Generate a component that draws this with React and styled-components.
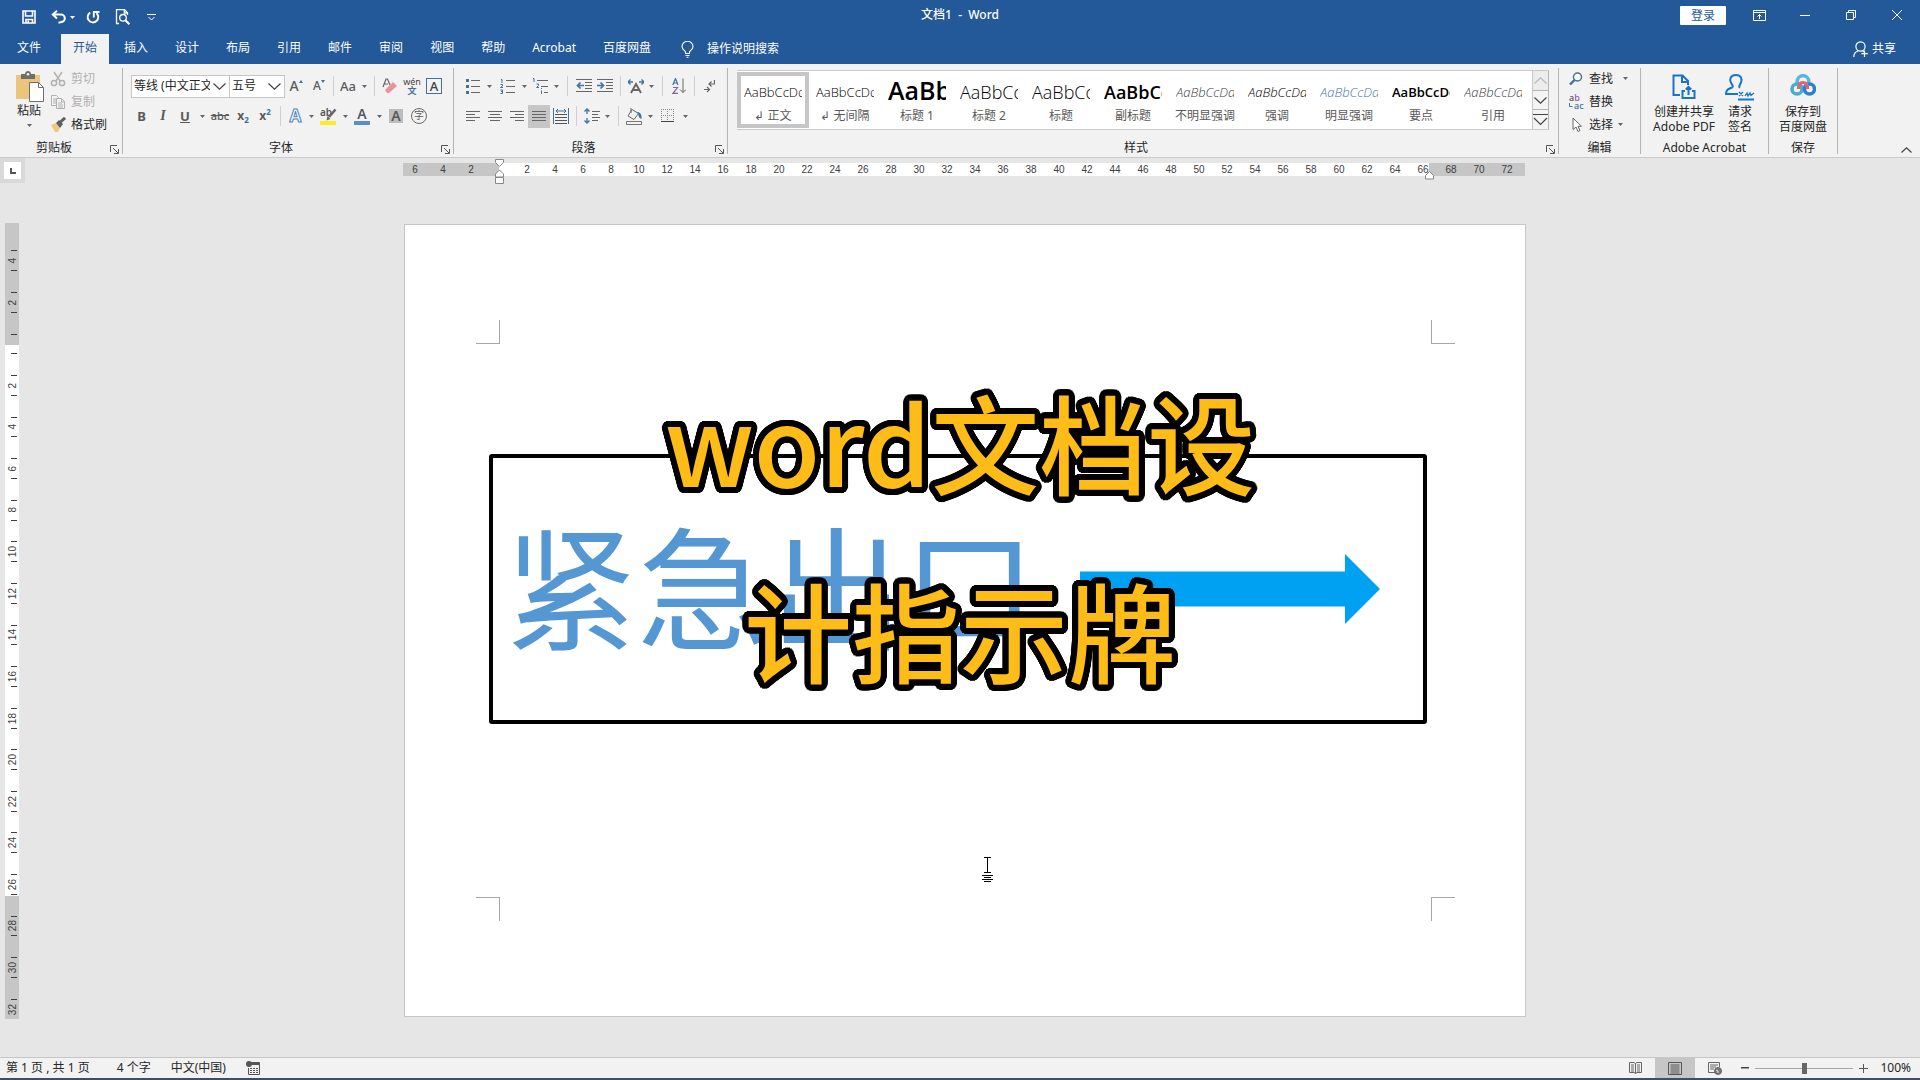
import React from "react";
import styled, { createGlobalStyle, css } from "styled-components";

const UI_FONT = '"Noto Sans", "Noto Sans CJK SC", sans-serif';
const BLUE = "#235899";
const STEEL = "#41719c";
const INK = "#5a5a5a";

const Global = createGlobalStyle`
  *, *::before, *::after { box-sizing: border-box; }
  body { margin: 0; font: 12px/16px ${UI_FONT}; color: #262626; background: #e6e6e6; }
  button, select, input { font: inherit; color: inherit; }
  button { border: 0; padding: 0; background: none; white-space: nowrap; }
  svg { display: block; flex: none; }
`;

const Shell = styled.div`
  position: relative;
  display: flex;
  flex-direction: column;
  min-height: 100vh;
  overflow: hidden;
`;

/* ---------- title bar ---------- */
const TitleBar = styled.header`
  display: grid;
  grid-template-columns: 1fr auto 1fr;
  height: 34px;
  background: ${BLUE};
  color: #fff;
`;
const QuickAccess = styled.div`
  display: flex;
  align-items: center;
  padding-left: 12px;
`;
const QuickButton = styled.button`
  display: flex;
  align-items: center;
  justify-content: center;
  width: ${(p) => p.$w || 32}px;
  height: 32px;
`;
const DocTitle = styled.h1`
  margin: 0;
  font-size: 12px;
  font-weight: 500;
  line-height: 30px;
  white-space: pre;
`;
const WindowTools = styled.div`
  display: flex;
  justify-content: flex-end;
  align-items: flex-start;
`;
const LoginButton = styled.button`
  width: 46px;
  height: 19px;
  margin: 6px 10px 0 0;
  border-radius: 1px;
  background: #fff;
  color: ${BLUE};
`;
const WindowButton = styled.button`
  display: flex;
  align-items: center;
  justify-content: center;
  width: 46px;
  height: 30px;
`;

/* ---------- tabs ---------- */
const TabBar = styled.nav`
  display: flex;
  height: 30px;
  gap: 3px;
  background: ${BLUE};
  color: #fff;
`;
const Tab = styled.button`
  height: 30px;
  padding: 0 ${(p) => (p.$file ? 17 : 12)}px 2px;
  color: ${(p) => (p.$active ? BLUE : "#fff")};
  background: ${(p) => (p.$active ? "#f2f2f2" : "transparent")};
`;
const TellMe = styled.button`
  display: flex;
  align-items: center;
  gap: 13px;
  margin-left: 15px;
`;
const Share = styled.button`
  display: flex;
  align-items: center;
  gap: 4px;
  margin: 0 24px 0 auto;
`;

/* ---------- ribbon ---------- */
const Ribbon = styled.section`
  display: flex;
  height: 94px;
  padding-top: 4px;
  background: #f2f2f2;
  border-bottom: 1px solid #cacaca;
`;
const GroupBox = styled.div`
  display: flex;
  flex-direction: column;
  flex: ${(p) => (p.$w ? "none" : "1")};
  min-width: 0;
  width: ${(p) => (p.$w ? p.$w + "px" : "auto")};
  height: 86px;
  border-right: 1px solid #b4b4b4;
`;
const GroupBody = styled.div`
  display: flex;
  flex: 1;
  min-height: 0;
  padding: 0 ${(p) => p.$px ?? 8}px;
  flex-direction: ${(p) => (p.$column ? "column" : "row")};
`;
const GroupFoot = styled.div`
  display: flex;
  align-items: center;
  height: 16px;
  margin-bottom: -2px;
`;
const GroupName = styled.span`
  flex: 1;
  text-align: center;
`;
const Launcher = styled.button`
  display: flex;
  width: 14px;
  padding: 2px 0 0 2px;
`;
const ToolRow = styled.div`
  display: flex;
  align-items: center;
  height: 30px;
  margin-top: ${(p) => p.$top || 0}px;
`;
const Tool = styled.button`
  display: flex;
  align-items: center;
  justify-content: center;
  width: ${(p) => p.$w || 22}px;
  height: 23px;
  flex: none;
  color: ${INK};
  background: ${(p) => (p.$on ? "#c6c6c6" : "transparent")};
`;
const Divider = styled.span`
  display: flex;
  justify-content: center;
  flex: none;
  width: ${(p) => p.$w}px;
  height: 20px;
  &::before {
    content: "";
    width: 1px;
    background: #d0d0d0;
  }
`;
const CaretBox = styled.button`
  display: flex;
  align-items: center;
  justify-content: center;
  flex: none;
  width: ${(p) => p.$w || 8}px;
  height: 23px;
`;
const Letter = styled.span`
  font-family: ${(p) => (p.$serif ? '"Liberation Serif", serif' : UI_FONT)};
  font-size: ${(p) => p.$size || 14}px;
  font-weight: ${(p) => (p.$bold ? 700 : 500)};
  font-style: ${(p) => (p.$italic ? "italic" : "normal")};
  text-decoration: ${(p) => p.$line || "none"};
  line-height: 16px;
  sub, sup { font-size: 8px; line-height: 0; color: ${STEEL}; }
`;
const OutlineLetter = styled.span`
  font-size: 17px;
  font-weight: 700;
  color: #fff;
  line-height: 18px;
  -webkit-text-stroke: 1px #4a83bd;
`;
const BarLetter = styled.span`
  display: block;
  width: 16px;
  height: 18px;
  font-size: 14px;
  font-weight: 600;
  line-height: 13px;
  text-align: center;
  color: ${INK};
  border-bottom: 4px solid #5b8fc0;
`;
const ShadeLetter = styled.span`
  width: 14px;
  height: 14px;
  font-size: 14px;
  font-weight: 600;
  line-height: 14px;
  background: #bdbdbd;
`;
const BoxLetter = styled.span`
  width: 16px;
  height: 16px;
  border: 1px solid ${STEEL};
  font-size: 13px;
  font-weight: 500;
  line-height: 14px;
  color: #404040;
`;
const CircleLetter = styled.span`
  width: 16px;
  height: 16px;
  border: 1px solid #6a6a6a;
  border-radius: 50%;
  font-size: 10px;
  line-height: 13px;
`;
const Pinyin = styled.span`
  display: flex;
  flex-direction: column;
  align-items: center;
  font-size: 9px;
  line-height: 8px;
  color: #444;
  b { font-size: 9px; line-height: 9px; color: ${STEEL}; }
`;

const PasteButton = styled.button`
  display: flex;
  flex-direction: column;
  align-items: center;
  width: 42px;
  padding-top: 3px;
  color: #262626;
`;
const PasteLabel = styled.span`
  margin: 1px 0 5px;
`;
const CommandList = styled.div`
  display: flex;
  flex-direction: column;
  margin-top: -1px;
`;
const Command = styled.button`
  display: flex;
  align-items: center;
  height: 23px;
  gap: 5px;
  color: ${(p) => (p.disabled ? "#b1b1b1" : "#262626")};
`;

const Combo = styled.label`
  display: flex;
  align-items: center;
  gap: 3px;
  width: ${(p) => p.$w}px;
  height: 23px;
  padding-right: 3px;
  border: 1px solid #c6c6c6;
  margin-right: -1px;
  background: #fff;
  flex: none;
`;
const ComboSelect = styled.select`
  flex: 1;
  min-width: 0;
  height: 21px;
  padding: 0 0 0 2px;
  border: 0;
  appearance: none;
  background: transparent;
  overflow: hidden;
  text-overflow: clip;
`;

/* ---------- style gallery ---------- */
const Gallery = styled.div`
  display: flex;
  flex: 1;
  height: 60px;
  margin-top: 2px;
  background: #fff;
  border: 1px solid #cacaca;
  border-width: 1px 0;
  min-width: 0;
`;
const StyleItems = styled.div`
  display: flex;
  flex: 1;
  overflow: hidden;
`;
const StyleItem = styled.button`
  display: flex;
  flex-direction: column;
  align-items: center;
  width: 72px;
  height: 56px;
  margin-top: 1px;
  flex: none;
  border: 4px solid ${(p) => (p.$on ? "#c6c6c6" : "transparent")};
`;
const Preview = styled.span`
  width: 58px;
  height: 32px;
  overflow: hidden;
  text-align: left;
  line-height: ${(p) => (p.$size > 20 ? 28 : 32)}px;
  font-family: "Open Sans", sans-serif;
  font-size: ${(p) => p.$size || 13}px;
  font-weight: ${(p) => p.$weight || 300};
  font-style: ${(p) => (p.$italic ? "italic" : "normal")};
  color: ${(p) => p.$color || "#000"};
`;
const StyleName = styled.span`
  line-height: 16px;
  color: #595959;
`;
const GalleryScroll = styled.div`
  display: flex;
  flex-direction: column;
  width: 17px;
  border-left: 1px solid #c6c6c6;
`;
const ScrollButton = styled.button`
  display: flex;
  align-items: center;
  justify-content: center;
  flex: 1;
  border: 1px solid #b4b4b4;
  border-width: 0 1px ${(p) => (p.$last ? 0 : 1)}px 0;
  background: ${(p) => (p.$off ? "#ececec" : "#f4f4f4")};
`;

const BigButton = styled.button`
  display: flex;
  flex-direction: column;
  align-items: center;
  width: ${(p) => p.$w}px;
  padding-top: 6px;
  line-height: 15px;
`;
const BigIcon = styled.span`
  display: flex;
  height: 30px;
`;
const CollapseArea = styled.div`
  display: flex;
  justify-content: flex-end;
  align-items: flex-end;
  width: 82px;
  padding: 0 8px 4px 0;
`;

/* ---------- rulers and page ---------- */
const RulerRow = styled.div`
  display: flex;
  height: 25px;
  padding-right: 17px;
`;
const TabSelector = styled.button`
  display: flex;
  align-items: center;
  justify-content: center;
  width: 25px;
  height: 25px;
  border: 4px solid #d9d9d9;
  background: #fff;
`;
const RulerCenter = styled.div`
  display: flex;
  flex: 1;
  justify-content: center;
  padding-top: 5px;
`;
const Ruler = styled.div`
  position: relative;
  display: flex;
  height: 13px;
  font: 10px/14px "Liberation Sans", sans-serif;
  color: #404040;
`;
const RulerPart = styled.div`
  display: flex;
  width: ${(p) => p.$w}px;
  padding: 0 ${(p) => p.$end || 0}px 0 ${(p) => p.$start || 0}px;
  justify-content: ${(p) => (p.$end ? "flex-end" : "flex-start")};
  background: ${(p) => (p.$margin ? "#c6c6c6" : "#fff")};
  overflow: hidden;
`;
const RulerNumber = styled.span`
  width: 28px;
  flex: none;
  text-align: center;
`;
const IndentMark = styled.svg`
  position: absolute;
  left: ${(p) => p.$x}px;
  top: ${(p) => p.$y}px;
`;

const Workspace = styled.main`
  display: flex;
  flex: 1;
  gap: 1px;
  padding: 40px 10px 0 5px;
`;
const VRuler = styled.div`
  width: 14px;
  height: 796px;
  overflow: hidden;
  padding-top: 17px;
  background: linear-gradient(#c6c6c6 122px, #fff 122px, #fff 673px, #c6c6c6 673px);
  font: 10px/9px "Liberation Sans", sans-serif;
  color: #404040;
`;
const VScale = styled.div`
  display: grid;
  grid-template-rows: repeat(19, 1fr);
  height: 790px;
`;
const VCell = styled.div`
  display: grid;
  grid-template-rows: 1fr 2fr 1fr;
`;
const VMark = styled.span`
  grid-row: 2;
  display: flex;
  align-items: center;
  justify-content: flex-end;
  width: 6px;
  margin-left: 6px;
  border: 1px solid #404040;
  border-width: 1px 0;
`;
const VNumber = styled.span`
  flex: none;
  writing-mode: vertical-rl;
  rotate: 180deg;
`;
const Canvas = styled.div`
  display: flex;
  flex: 1;
  justify-content: center;
  align-items: flex-start;
  padding-top: 1px;
`;
const Page = styled.article`
  display: flex;
  flex-direction: column;
  width: 1122px;
  padding: 95px 70px 95px 71px;
  background: #fff;
  border: 1px solid #c6c6c6;
`;
const MarkRow = styled.div`
  display: flex;
  justify-content: space-between;
`;
const cornerSides = {
  tl: "0 1px 1px 0",
  tr: "0 0 1px 1px",
  bl: "1px 1px 0 0",
  br: "1px 0 0 1px",
};
const CornerMark = styled.span`
  width: 24px;
  height: 24px;
  border: 0 solid #a6a6a6;
  border-width: ${(p) => cornerSides[p.$at]};
`;
const PageBody = styled.div`
  height: 553px;
  padding: 110px 28px 0 13px;
`;
const Sign = styled.div`
  display: flex;
  align-items: center;
  gap: 44px;
  height: 270px;
  padding-left: 11px;
  border: 4px solid #000;
  border-radius: 3px;
`;
const SignText = styled.p`
  margin: 0;
  padding-bottom: 14px;
  font: 400 133px/160px "Noto Sans CJK SC", sans-serif;
  color: #5597d2;
  white-space: nowrap;
`;
const Pointer = styled.svg`
  position: absolute;
  left: 981px;
  top: 857px;
`;

const ring = Array.from({ length: 36 }, (_, i) => {
  const a = (i * Math.PI) / 18;
  return `${(6 * Math.cos(a)).toFixed(2)}px ${(6 * Math.sin(a)).toFixed(2)}px 0 #000`;
}).join(", ");
const Caption = styled.div`
  position: absolute;
  inset: 0;
  display: flex;
  flex-direction: column;
  align-items: center;
  justify-content: center;
  padding-bottom: 12px;
  font: 500 108px/188px "Noto Sans CJK SC", sans-serif;
  color: #fdbc18;
  text-shadow: ${ring};
  white-space: nowrap;
  pointer-events: none;
`;

/* ---------- status bar ---------- */
const StatusBar = styled.footer`
  display: flex;
  align-items: center;
  height: 23px;
  padding-left: 6px;
  background: #f2f2f2;
  border-top: 1px solid #c6c6c6;
  border-bottom: 2px solid #3c4f66;
`;
const StatusItem = styled.button`
  margin-right: ${(p) => p.$gap || 20}px;
  white-space: pre;
`;
const StatusRight = styled.div`
  display: flex;
  align-items: center;
  margin-left: auto;
  padding-right: 9px;
`;
const ViewButton = styled.button`
  display: flex;
  align-items: center;
  justify-content: center;
  width: 40px;
  height: 20px;
  background: ${(p) => (p.$on ? "#c6c6c6" : "transparent")};
`;
const ZoomStep = styled.button`
  display: flex;
  align-items: center;
  justify-content: center;
  width: 20px;
  height: 20px;
`;
const thumb = css`
  appearance: none;
  width: 5px;
  height: 11px;
  margin-top: -5px;
  border: 0;
  border-radius: 0;
  background: #666;
`;
const ZoomSlider = styled.input`
  appearance: none;
  width: 98px;
  height: 20px;
  margin: 0;
  background: transparent;
  &::-webkit-slider-runnable-track { height: 1px; background: #a6a6a6; }
  &::-webkit-slider-thumb { ${thumb} }
`;
const ZoomValue = styled.button`
  width: 38px;
  text-align: right;
`;

/* ---------- icons ---------- */
const Ico = ({ w = 16, h = 16, s = "none", f = "none", sw = 1, children }) => (
  <svg width={w} height={h} viewBox={`0 0 ${w} ${h}`} fill={f} stroke={s} strokeWidth={sw} aria-hidden="true">
    {children}
  </svg>
);
const Triangle = ({ color = "#666" }) => (
  <Ico w={5} h={3} f={color}><path d="M0 0h5L2.500 3z" /></Ico>
);
const Caret = ({ w }) => (
  <CaretBox $w={w} aria-label="更多选项"><Triangle /></CaretBox>
);
const Chevron = ({ w = 13, h = 7, color = "#444", up }) => (
  <Ico w={w} h={h} s={color} sw={1.2}>
    <path d={up ? `M.5 ${h - 0.5}L${w / 2} .8L${w - 0.5} ${h - 0.5}` : `M.5 .5L${w / 2} ${h - 0.8}L${w - 0.5} .5`} />
  </Ico>
);
const LauncherIcon = () => (
  <Ico w={9} h={9} s="#555"><path d="M.5 7V.5H7M3 3l5 5M8.500 4v4.500H4" /></Ico>
);
const Lines = ({ rows }) => (
  <Ico s="#666">
    {rows.map(([y, a, b]) => <path key={y} d={`M${a} ${y}H${b}`} />)}
  </Ico>
);

const Group = ({ name, w, launcher, px, column, children }) => (
  <GroupBox $w={w}>
    <GroupBody $px={px} $column={column}>{children}</GroupBody>
    <GroupFoot>
      <GroupName>{name}</GroupName>
      {launcher && <Launcher aria-label={`${name}设置`}><LauncherIcon /></Launcher>}
    </GroupFoot>
  </GroupBox>
);

const tabs = ["文件", "开始", "插入", "设计", "布局", "引用", "邮件", "审阅", "视图", "帮助", "Acrobat", "百度网盘"];

const docStyles = [
  { name: "↲ 正文", on: true },
  { name: "↲ 无间隔" },
  { name: "标题 1", size: 25, weight: 600 },
  { name: "标题 2", size: 18 },
  { name: "标题", size: 18 },
  { name: "副标题", size: 18, weight: 600 },
  { name: "不明显强调", italic: true, color: "#404040" },
  { name: "强调", italic: true },
  { name: "明显强调", italic: true, color: "#3f76a8" },
  { name: "要点", weight: 600 },
  { name: "引用", italic: true, color: "#404040" },
];

const evens = (from, to) => {
  const out = [];
  for (let n = from; n <= to; n += 2) out.push(n);
  return out;
};

function TopBar() {
  return (
    <TitleBar>
      <QuickAccess>
        <QuickButton $w={34} aria-label="保存">
          <Ico w={14} h={14} s="#fff" sw={1.6}><path d="M1 1h12v12H1zM3.500 1v5h7V1M4 13V9.500h6.500V13M6.300 10.500V13" /></Ico>
        </QuickButton>
        <QuickButton $w={24} aria-label="撤消">
          <Ico w={15} h={14} s="#fff" sw={2}><path d="M6 .8L1.800 4.500L6 8.500M2 4.500h7.500a3.800 3.800 0 0 1 1 7.600l-3 .6" /></Ico>
        </QuickButton>
        <Triangle color="#fff" />
        <QuickButton $w={36} aria-label="重复">
          <Ico w={14} h={14} s="#fff" sw={1.9}><path d="M4.200 2.600A5.300 5.300 0 1 0 10.500 3.200M7.800 7.500V2H13.500" /></Ico>
        </QuickButton>
        <QuickButton $w={24} aria-label="打印预览">
          <Ico w={16} h={16} s="#fff" sw={1.3}><path d="M4 14.500H1.500V.7h8l3 3V6M9.300 1v3h3" /><circle cx="8" cy="8.800" r="3.300" /><path d="M10.400 11.200l4 4" strokeWidth="2.200" /></Ico>
        </QuickButton>
        <QuickButton $w={32} aria-label="自定义快速访问工具栏">
          <Ico w={9} h={7} s="#fff"><path d="M0 .5h9M1.500 3l3 3l3-3" /></Ico>
        </QuickButton>
      </QuickAccess>
      <DocTitle>{"文档1  -  Word"}</DocTitle>
      <WindowTools>
        <LoginButton>登录</LoginButton>
        <WindowButton aria-label="功能区显示选项">
          <Ico w={13} h={11} s="#fff"><path d="M.5 .5h12v10H.5zM.5 2.500h12M6.500 9V4.500M4.500 6.500l2-2l2 2" /></Ico>
        </WindowButton>
        <WindowButton aria-label="最小化"><Ico w={10} h={1} f="#fff"><path d="M0 0h10v1H0z" /></Ico></WindowButton>
        <WindowButton aria-label="还原"><Ico w={10} h={10} s="#fff"><path d="M.5 2.500h7v7h-7zM2.500 2V.5h7v7H8" /></Ico></WindowButton>
        <WindowButton aria-label="关闭"><Ico w={10} h={10} s="#fff"><path d="M0 0l10 10M10 0L0 10" /></Ico></WindowButton>
      </WindowTools>
    </TitleBar>
  );
}

function Tabs() {
  return (
    <TabBar>
      {tabs.map((t, i) => <Tab key={t} $file={i === 0} $active={i === 1}>{t}</Tab>)}
      <TellMe>
        <Ico w={13} h={17} s="#fff" sw={1.1}><path d="M4.500 12.500V11C4 9.500 1 8.500 1 5.500a5.300 5 0 0 1 11 0C12 8.500 9 9.500 8.500 11v1.500zM4.500 14.500h4M5.500 16.300h2" /></Ico>
        操作说明搜索
      </TellMe>
      <Share>
        <Ico w={15} h={17} s="#fff" sw={1.2}><circle cx="7.500" cy="5.500" r="4.600" /><path d="M.8 16c0-3 1.700-5.300 4.200-6M9.500 10c.6.200 1 .5 1.400 1M11.500 9.500v6.500M8.300 12.700h6.500" /></Ico>
        共享
      </Share>
    </TabBar>
  );
}

const Clipboard = () => (
  <Group name="剪贴板" w={123} launcher px={8}>
    <PasteButton>
      <Ico w={29} h={31}>
        <path d="M1 4h24v24H1z" fill="#ecc57c" />
        <path d="M6 3h4c0-4 6-4 6 0h4v5H6z" fill="#6e6e6e" /><circle cx="13" cy="3.200" r="1.300" fill="#f2f2f2" />
        <path d="M14.500 11.500h9l5 5V30.500h-14z" fill="#fff" stroke="#6e6e6e" /><path d="M23.500 11.500v5h5" stroke="#6e6e6e" />
      </Ico>
      <PasteLabel>粘贴</PasteLabel>
      <Triangle />
    </PasteButton>
    <CommandList>
      <Command disabled>
        <Ico s="#b1b1b1" sw={1.5}><path d="M4 1l6 9M12 1L6 10" /><circle cx="4" cy="12" r="2.600" /><circle cx="12" cy="12" r="2.600" /></Ico>
        剪切
      </Command>
      <Command disabled>
        <Ico s="#b1b1b1"><path d="M6 11.500H1.500v-10h5l2 2V5M3 5h3M3 7h3M3 9h3" /><path d="M6.500 4.500h5l3 3v7h-8zM11.500 5v3h3M8 9h4M8 11h5M8 13h5" /></Ico>
        复制
      </Command>
      <Command>
        <Ico><path d="M1 8l5-2l4 5l-2 4H5z" fill="#edc883" /><path d="M6 6l3-3l4 4l-3 4z" fill="#5f5f5f" /><path d="M10.500 5L15 .8" stroke="#5f5f5f" strokeWidth="3" /></Ico>
        格式刷
      </Command>
    </CommandList>
  </Group>
);

const FontGroup = () => (
  <Group name="字体" w={331} launcher px={8} column>
    <ToolRow $top={3}>
      <Combo $w={99}>
        <ComboSelect aria-label="字体"><option>等线 (中文正文)</option></ComboSelect>
        <Chevron />
      </Combo>
      <Combo $w={56}>
        <ComboSelect aria-label="字号"><option>五号</option></ComboSelect>
        <Chevron />
      </Combo>
      <Tool $w={24} aria-label="增大字号"><Letter $size={14}>A</Letter><Ico w={4} h={12} f={STEEL}><path d="M0 3h4L2 0z" /></Ico></Tool>
      <Tool $w={22} aria-label="减小字号"><Letter $size={12}>A</Letter><Ico w={4} h={12} f={STEEL}><path d="M0 0h4L2 3z" /></Ico></Tool>
      <Divider $w={6} />
      <Tool $w={24} aria-label="更改大小写"><Letter $size={13}>Aa</Letter></Tool>
      <Caret />
      <Divider $w={12} />
      <Tool $w={20} aria-label="清除格式">
        <Ico><path d="M1 9L4 1h1.500L8 7M2 6h4" stroke="#666" strokeWidth="1.200" /><path d="M3 12l8-8l4 4l-8 7H5z" fill="#e9929b" /></Ico>
      </Tool>
      <Tool $w={24} aria-label="拼音指南"><Pinyin>wén<b>文</b></Pinyin></Tool>
      <Tool $w={20} aria-label="字符边框"><BoxLetter>A</BoxLetter></Tool>
    </ToolRow>
    <ToolRow>
      <Tool $w={21} aria-label="加粗"><Letter $bold $size={13}>B</Letter></Tool>
      <Tool aria-label="倾斜"><Letter $bold $italic $serif $size={14}>I</Letter></Tool>
      <Tool aria-label="下划线"><Letter $bold $size={13} $line="underline">U</Letter></Tool>
      <Caret w={12} />
      <Tool $w={24} aria-label="删除线"><Letter $size={11} $line="line-through">abc</Letter></Tool>
      <Tool aria-label="下标"><Letter $bold $size={12}>x<sub>2</sub></Letter></Tool>
      <Tool aria-label="上标"><Letter $bold $size={12}>x<sup>2</sup></Letter></Tool>
      <Divider $w={8} />
      <Tool $w={23} aria-label="文本效果"><OutlineLetter>A</OutlineLetter></Tool>
      <Caret />
      <Tool $w={26} aria-label="突出显示">
        <Ico w={17} h={18}>
          <path d="M0 14h16v4H0z" fill="#fdec20" />
          <text x="0" y="9" fontFamily="Noto Sans" fontSize="10" fontWeight="600" fill="#555">ab</text>
          <path d="M15.500 2.500L9 10" stroke="#666" strokeWidth="2.500" /><path d="M7.500 9l3 3l-4 1.500z" fill="#666" />
        </Ico>
      </Tool>
      <Caret />
      <Tool $w={26} aria-label="字体颜色"><BarLetter>A</BarLetter></Tool>
      <Caret />
      <Tool $w={26} aria-label="字符底纹"><ShadeLetter>A</ShadeLetter></Tool>
      <Tool $w={20} aria-label="带圈字符"><CircleLetter>字</CircleLetter></Tool>
    </ToolRow>
  </Group>
);

const four = (a, b) => [[3.5, 1, a], [6.5, 1, b], [9.5, 1, a], [12.5, 1, b]];

const Paragraph = () => (
  <Group name="段落" w={274} launcher px={8} column>
    <ToolRow $top={3}>
      <Tool $w={21} aria-label="项目符号">
        <Ico w={14} h={16}><path d="M0 1h3v3H0zM0 7h3v3H0zM0 13h3v3H0z" fill={STEEL} /><path d="M5 2.500h9M5 8.500h9M5 14.500h9" stroke="#666" /></Ico>
      </Tool>
      <Caret w={12} />
      <Tool $w={24} aria-label="编号">
        <Ico w={15} h={16}><path d="M1 1.500h1V5M.5 6.500h2v1.500l-2 1.500h2.500M.5 12h2v3.500h-2M1 13.500h1.500" stroke={STEEL} /><path d="M6 2.500h9M6 8.500h9M6 14.500h9" stroke="#666" /></Ico>
      </Tool>
      <Caret w={10} />
      <Tool $w={23} aria-label="多级列表">
        <Ico w={17} h={16}><path d="M1 .5h1V4M4.500 6h2v1.500L4.500 9.500H7M9.500 10v1M9.500 12.500V16" stroke={STEEL} /><path d="M5 2.500h11M9 8.500h7M12 14.500h4" stroke="#666" /></Ico>
      </Tool>
      <Caret />
      <Divider $w={14} />
      <Tool $w={19} aria-label="减少缩进量">
        <Ico w={16} h={14}><path d="M0 .5h16M9 3.500h7M9 6.500h7M9 9.500h7M0 12.500h16" stroke="#666" /><path d="M8 6.500H2M4.500 3.500l-3 3l3 3" stroke={STEEL} strokeWidth="1.700" /></Ico>
      </Tool>
      <Tool $w={23} aria-label="增加缩进量">
        <Ico w={16} h={14}><path d="M0 .5h16M9 3.500h7M9 6.500h7M9 9.500h7M0 12.500h16" stroke="#666" /><path d="M0 6.500h6M3.500 3.500l3 3l-3 3" stroke={STEEL} strokeWidth="1.700" /></Ico>
      </Tool>
      <Divider $w={8} />
      <Tool $w={23} aria-label="中文版式">
        <Ico w={16} h={15}><path d="M3 14L8 5l5 9M5 11h6" stroke="#666" strokeWidth="1.900" /><path d="M0 3h5M2.500 .5L0 3l2.500 2.500M16 3h-5M13.500 .5L16 3l-2.500 2.500" stroke={STEEL} strokeWidth="1.300" /></Ico>
      </Tool>
      <Caret />
      <Divider $w={14} />
      <Tool $w={20} aria-label="排序">
        <Ico w={14} h={16}><path d="M.8 7L3.500 .5L6 7M1.800 5H5.300" stroke={STEEL} strokeWidth="1.200" /><path d="M1 9.500h4.500L1 15.300h5" stroke="#8a5fa5" strokeWidth="1.200" /><path d="M11 .5v14M8 11.500l3 3l3-3" stroke="#666" /></Ico>
      </Tool>
      <Divider $w={10} />
      <Tool $w={20} aria-label="显示编辑标记">
        <Ico w={11} h={13} s="#666" sw={1.200}><path d="M10.500 0v4H5M7.500 1.500L5 4l2.500 2.500M0 9.500h5.500M3 7l2.500 2.500L3 12" /></Ico>
      </Tool>
    </ToolRow>
    <ToolRow>
      <Tool aria-label="左对齐"><Lines rows={four(15, 10)} /></Tool>
      <Tool aria-label="居中"><Lines rows={[[3.5, 1, 15], [6.5, 3, 13], [9.5, 1, 15], [12.5, 3, 13]]} /></Tool>
      <Tool aria-label="右对齐"><Lines rows={[[3.5, 1, 15], [6.5, 6, 15], [9.5, 1, 15], [12.5, 6, 15]]} /></Tool>
      <Tool $on aria-label="两端对齐"><Lines rows={four(15, 15)} /></Tool>
      <Tool aria-label="分散对齐">
        <Ico><path d="M.5 0v16M15.500 0v16M3 3h10M5 1L3 3l2 2M11 1l2 2l-2 2" stroke={STEEL} /><path d="M2 6.500h12M2 9.500h12M2 12.500h12M2 15.500h12" stroke="#555" /></Ico>
      </Tool>
      <Divider $w={9} />
      <Tool aria-label="行和段落间距">
        <Ico><path d="M3 1v5M3 10v5M.5 3.500L3 1l2.500 2.500M.5 12.500L3 15l2.500-2.500" stroke={STEEL} strokeWidth="1.300" /><path d="M8 3.500h8M8 6.500h6M8 9.500h8M8 12.500h6" stroke="#666" /></Ico>
      </Tool>
      <Caret />
      <Divider $w={15} />
      <Tool $w={16} aria-label="底纹">
        <Ico w={16} h={17}><path d="M6 1.500L2 8l6 3.500l4.500-6z" stroke="#666" /><path d="M5 0v5" stroke="#666" /><path d="M11 4c3 0 5 2 4.500 7c-2-1-3-2-3-4z" fill={STEEL} /><path d="M.5 13.500h15v3H.5z" stroke="#777" /></Ico>
      </Tool>
      <Caret w={16} />
      <Tool $w={20} aria-label="边框">
        <Ico w={14} h={14} s="#888"><path d="M.5 0v13M6.500 0v13M12.500 0v13M0 .5h13M0 6.500h13" strokeDasharray="1 1" /><path d="M0 12.500h13" stroke="#444" /></Ico>
      </Tool>
      <Caret w={14} />
    </ToolRow>
  </Group>
);

const StylesGroup = () => (
  <Group name="样式" launcher px={9}>
    <Gallery>
      <StyleItems>
        {docStyles.map((s) => (
          <StyleItem key={s.name} $on={s.on}>
            <Preview $size={s.size} $weight={s.weight} $italic={s.italic} $color={s.color}>AaBbCcDd</Preview>
            <StyleName>{s.name}</StyleName>
          </StyleItem>
        ))}
      </StyleItems>
      <GalleryScroll>
        <ScrollButton $off aria-label="上一行"><Chevron up color="#b8b8b8" /></ScrollButton>
        <ScrollButton aria-label="下一行"><Chevron /></ScrollButton>
        <ScrollButton $last aria-label="其他"><Ico w={15} h={13} s="#444" sw={1.2}><path d="M0 1.500h15M1 5l6.500 6.500L14 5" /></Ico></ScrollButton>
      </GalleryScroll>
    </Gallery>
  </Group>
);

const Editing = () => (
  <Group name="编辑" w={82} px={9}>
    <CommandList>
      <Command>
        <Ico w={16} h={14}><circle cx="9.500" cy="5" r="4" stroke={STEEL} strokeWidth="1.500" fill="#fff" /><path d="M6.500 8L2 12.500" stroke={STEEL} strokeWidth="2.400" /></Ico>
        查找<Caret w={14} />
      </Command>
      <Command>
        <Ico><g fontFamily="Noto Sans" fontSize="9" fontWeight="500"><text x="1" y="7" fill="#555">a<tspan fill="#8a5fa5">b</tspan></text><text x="6" y="15" fill={STEEL}>ac</text></g><path d="M1.500 9v3.500h3" stroke={STEEL} /></Ico>
        替换
      </Command>
      <Command>
        <Ico s="#666"><path d="M5 1v11.500l3-2.500l2 4.500l2-1l-2-4.200h3.500z" fill="#fff" /></Ico>
        选择<Caret w={5} />
      </Command>
    </CommandList>
  </Group>
);

const AcrobatGroup = () => (
  <Group name="Adobe Acrobat" w={128} px={6}>
    <BigButton $w={74}>
      <BigIcon>
        <Ico w={24} h={25} s="#1a73c7" sw={2}><path d="M8 21H1.500V1.500h9L16 7v4M10 2v6h6M13 17h-2.500v7h12v-7H20M16.500 21v-8M13.800 15.500l2.700-2.700l2.700 2.700" /></Ico>
      </BigIcon>
      <span>创建并共享</span><span>Adobe PDF</span>
    </BigButton>
    <BigButton $w={38}>
      <BigIcon>
        <Ico w={30} h={27} s="#1a73c7" sw={2}><path d="M13 20H1c0-4 2-5 6-6.500c1-.5 1-2 0-3C3.500 5.500 5.500 1 11 1s7 4.500 4 9.500c-1 1.500-1 2.500 0 3.200" /><path d="M14 18l4 4M18 18l-4 4M20 22l2-3l1 3l2-3l1 2.500l3-2.500" strokeWidth="1.300" /><path d="M13 25.500h16" /></Ico>
      </BigIcon>
      <span>请求</span><span>签名</span>
    </BigButton>
  </Group>
);

const CloudSave = () => (
  <Group name="保存" w={69} px={0}>
    <BigButton $w={68}>
      <BigIcon>
        <Ico w={26} h={24} sw={3.6}><circle cx="13" cy="7.500" r="5.800" stroke="#58b8d8" /><circle cx="7" cy="15" r="5" stroke="#45afd0" /><circle cx="19.500" cy="15" r="5" stroke="#2a83c9" /><path d="M8.500 15C8.500 11 10 8.500 13 8.500s4.500 2.500 4.500 6.500" stroke="#ee5f74" strokeWidth="3.200" /></Ico>
      </BigIcon>
      <span>保存到</span><span>百度网盘</span>
    </BigButton>
  </Group>
);

function HorizontalRuler() {
  return (
    <RulerRow>
      <TabSelector aria-label="制表符"><Ico w={6} h={6} s="#555" sw={2}><path d="M1 0v5h5" /></Ico></TabSelector>
      <RulerCenter>
        <Ruler>
          <RulerPart $margin $w={96} $end={14}>{[6, 4, 2].map((n) => <RulerNumber key={n}>{n}</RulerNumber>)}</RulerPart>
          <RulerPart $w={930} $start={14}>{evens(2, 66).map((n) => <RulerNumber key={n}>{n}</RulerNumber>)}</RulerPart>
          <RulerPart $margin $w={96} $start={8}>{evens(68, 72).map((n) => <RulerNumber key={n}>{n}</RulerNumber>)}</RulerPart>
          <IndentMark $x={92} $y={-4} width="9" height="26" viewBox="0 0 9 26" fill="#fff" stroke="#888">
            <path d="M.5 .5h8v3l-4 4l-4-4zM.5 18v-3l4-4l4 4v3zM.5 18.500h8v6h-8z" />
          </IndentMark>
          <IndentMark $x={1022} $y={8} width="9" height="9" viewBox="0 0 9 9" fill="#fff" stroke="#888">
            <path d="M.5 8V4.500l4-4l4 4V8z" />
          </IndentMark>
        </Ruler>
      </RulerCenter>
    </RulerRow>
  );
}

function Document() {
  return (
    <Workspace>
      <VRuler>
        <VScale>
          {[4, 2, 0, ...evens(2, 32)].map((n, i) => (
            <VCell key={i}><VMark>{n > 0 && <VNumber>{n}</VNumber>}</VMark></VCell>
          ))}
        </VScale>
      </VRuler>
      <Canvas>
        <Page>
          <MarkRow><CornerMark $at="tl" /><CornerMark $at="tr" /></MarkRow>
          <PageBody>
            <Sign>
              <SignText>紧急出口</SignText>
              <Ico w={300} h={70} f="#00a0f3"><path d="M0 17.500H265V0l35 35l-35 35V52.500H0z" /></Ico>
            </Sign>
          </PageBody>
          <MarkRow><CornerMark $at="bl" /><CornerMark $at="br" /></MarkRow>
        </Page>
      </Canvas>
    </Workspace>
  );
}

function Status() {
  return (
    <StatusBar>
      <StatusItem $gap={27}>第 1 页 , 共 1 页</StatusItem>
      <StatusItem>4 个字</StatusItem>
      <StatusItem>中文(中国)</StatusItem>
      <StatusItem aria-label="宏录制">
        <Ico w={14} h={14}><path d="M5 1.500h8.500v12h-11V7" stroke="#555" /><path d="M6 2h7v2H6z" fill="#555" /><circle cx="3" cy="3" r="3" fill="#555" /><path d="M4 7.500h8M4 9.500h8M4 11.500h8" stroke="#555" strokeDasharray="2 1" /></Ico>
      </StatusItem>
      <StatusRight>
        <ViewButton aria-label="阅读视图">
          <Ico w={13} h={12} s="#666"><path d="M.5 .5h4.500l1.500 1l1.500-1h4.500v10H8l-1.500 1l-1.500-1H.5zM6.500 1.500v10M2 3h3M2 5h3M2 7h3M2 9h3M8 3h3M8 5h3M8 7h3M8 9h3" /></Ico>
        </ViewButton>
        <ViewButton $on aria-label="页面视图">
          <Ico w={14} h={13} s="#555"><path d="M.5 .5h13v12H.5zM2.500 3h9M2.500 5h9M2.500 7h9M2.500 9h9M2.500 11h9" /></Ico>
        </ViewButton>
        <ViewButton aria-label="Web 版式视图">
          <Ico w={14} h={13} s="#666"><path d="M7 10.500H.5V.5h11V5M2 3h8M2 5h6M2 7h4" /><circle cx="10" cy="9" r="3.500" fill="#777" /><path d="M8 8l2 1v2" stroke="#eee" /></Ico>
        </ViewButton>
        <ZoomStep aria-label="缩小"><Ico w={8} h={2} f="#444"><path d="M0 0h8v1.500H0z" /></Ico></ZoomStep>
        <ZoomSlider type="range" min="0" max="100" defaultValue="50" aria-label="显示比例" />
        <ZoomStep aria-label="放大"><Ico w={9} h={9} s="#555"><path d="M0 4.500h9M4.500 0v9" /></Ico></ZoomStep>
        <ZoomValue>100%</ZoomValue>
      </StatusRight>
    </StatusBar>
  );
}

export default function App() {
  return (
    <Shell>
      <Global />
      <TopBar />
      <Tabs />
      <Ribbon>
        <Clipboard />
        <FontGroup />
        <Paragraph />
        <StylesGroup />
        <Editing />
        <AcrobatGroup />
        <CloudSave />
        <CollapseArea>
          <button aria-label="折叠功能区"><Chevron up w={11} h={6} /></button>
        </CollapseArea>
      </Ribbon>
      <HorizontalRuler />
      <Document />
      <Status />
      <Pointer width="13" height="26" viewBox="0 0 13 26" stroke="#000" aria-hidden="true">
        <path d="M3 .5h7M6.500 0v15M3 15.500h7M1 18.500h11M3 20.500h7M1 22.500h11M3 24.500h7" />
      </Pointer>
      <Caption><span>word文档设</span><span>计指示牌</span></Caption>
    </Shell>
  );
}
